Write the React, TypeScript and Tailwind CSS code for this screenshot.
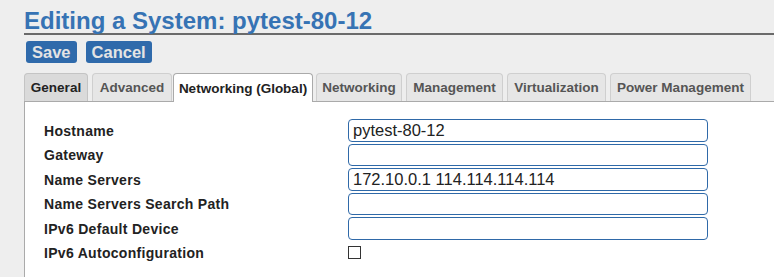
import React from 'react';

const TABS = [
  { label: 'General', w: 'w-[64px]', ml: 'ml-0', kind: 'selected' },
  { label: 'Advanced', w: 'w-[80px]', ml: 'ml-[4px]', kind: 'plain' },
  { label: 'Networking (Global)', w: 'w-[140px]', ml: 'ml-[1px]', kind: 'active' },
  { label: 'Networking', w: 'w-[86px]', ml: 'ml-[3px]', kind: 'plain' },
  { label: 'Management', w: 'w-[97px]', ml: 'ml-[4px]', kind: 'plain' },
  { label: 'Virtualization', w: 'w-[99px]', ml: 'ml-[4px]', kind: 'plain' },
  { label: 'Power Management', w: 'w-[141px]', ml: 'ml-[4px]', kind: 'plain' },
];

const FIELDS = [
  { label: 'Hostname', value: 'pytest-80-12' },
  { label: 'Gateway', value: '' },
  { label: 'Name Servers', value: '172.10.0.1 114.114.114.114' },
  { label: 'Name Servers Search Path', value: '' },
  { label: 'IPv6 Default Device', value: '' },
];

export default function App() {
  return (
    <div
      className="h-screen flex flex-col bg-[#eeeeee] overflow-hidden"
      style={{ fontFamily: '"Liberation Sans", Arial, sans-serif' }}
    >
      {/* Page title */}
      <h1 className="ml-[24px] mt-[9px] text-[24px] leading-[24px] font-bold text-[#3673b4] border-b-2 border-[#6a6a6a]">
        Editing a System: pytest-80-12
      </h1>

      {/* Form buttons */}
      <div className="flex gap-[9px] ml-[26px] mt-[6px]">
        <button className="h-[22px] px-[6px] rounded-[3px] bg-[#2f6aab] text-[#e4e4e4] text-[16.5px] font-bold leading-none">
          Save
        </button>
        <button className="h-[22px] px-[6px] rounded-[3px] bg-[#2f6aab] text-[#e4e4e4] text-[16.5px] font-bold leading-none">
          Cancel
        </button>
      </div>

      {/* Tabs */}
      <div className="flex items-end ml-[24px] mt-[10px] border-b border-[#aaaaaa]">
        {TABS.map((t) => (
          <div
            key={t.label}
            className={
              t.kind === 'active'
                ? `${t.w} ${t.ml} h-[29px] -mb-px pt-[2px] flex items-center justify-center rounded-t-[4px] border border-b-0 border-[#aaaaaa] bg-white text-[13.5px] font-bold text-[#222222]`
                : t.kind === 'selected'
                  ? `${t.w} ${t.ml} h-[28px] pt-[2px] flex items-center justify-center rounded-t-[4px] border border-b-0 border-[#c4c4c4] bg-[#dadada] text-[13.5px] font-bold text-[#222222]`
                  : `${t.w} ${t.ml} h-[28px] pt-[2px] flex items-center justify-center rounded-t-[4px] border border-b-0 border-[#cfcfcf] bg-[#e6e6e6] text-[13.5px] font-bold text-[#555555]`
            }
          >
            {t.label}
          </div>
        ))}
      </div>

      {/* Panel */}
      <div className="flex-1 ml-[24px] bg-white border-l border-[#aaaaaa] pl-[19px] pt-[16px]">
        {FIELDS.map((f) => (
          <div key={f.label} className="flex items-center h-[24.5px]">
            <div className="w-[304px] pt-[2px] text-[14px] font-bold tracking-[0.3px] text-[#222222]">{f.label}</div>
            <input
              type="text"
              defaultValue={f.value}
              className="w-[360px] h-[22.5px] px-[4px] rounded-[4px] border border-[#2f69a8] bg-white text-[16.5px] text-[#222222] outline-none"
              style={{ fontFamily: '"Liberation Sans", Arial, sans-serif' }}
            />
          </div>
        ))}
        <div className="flex items-center h-[24.5px]">
          <div className="w-[304px] pt-[2px] text-[14px] font-bold tracking-[0.3px] text-[#222222]">IPv6 Autoconfiguration</div>
          <span className="w-[13px] h-[13px] border border-[#333333] bg-white" />
        </div>
      </div>
    </div>
  );
}
